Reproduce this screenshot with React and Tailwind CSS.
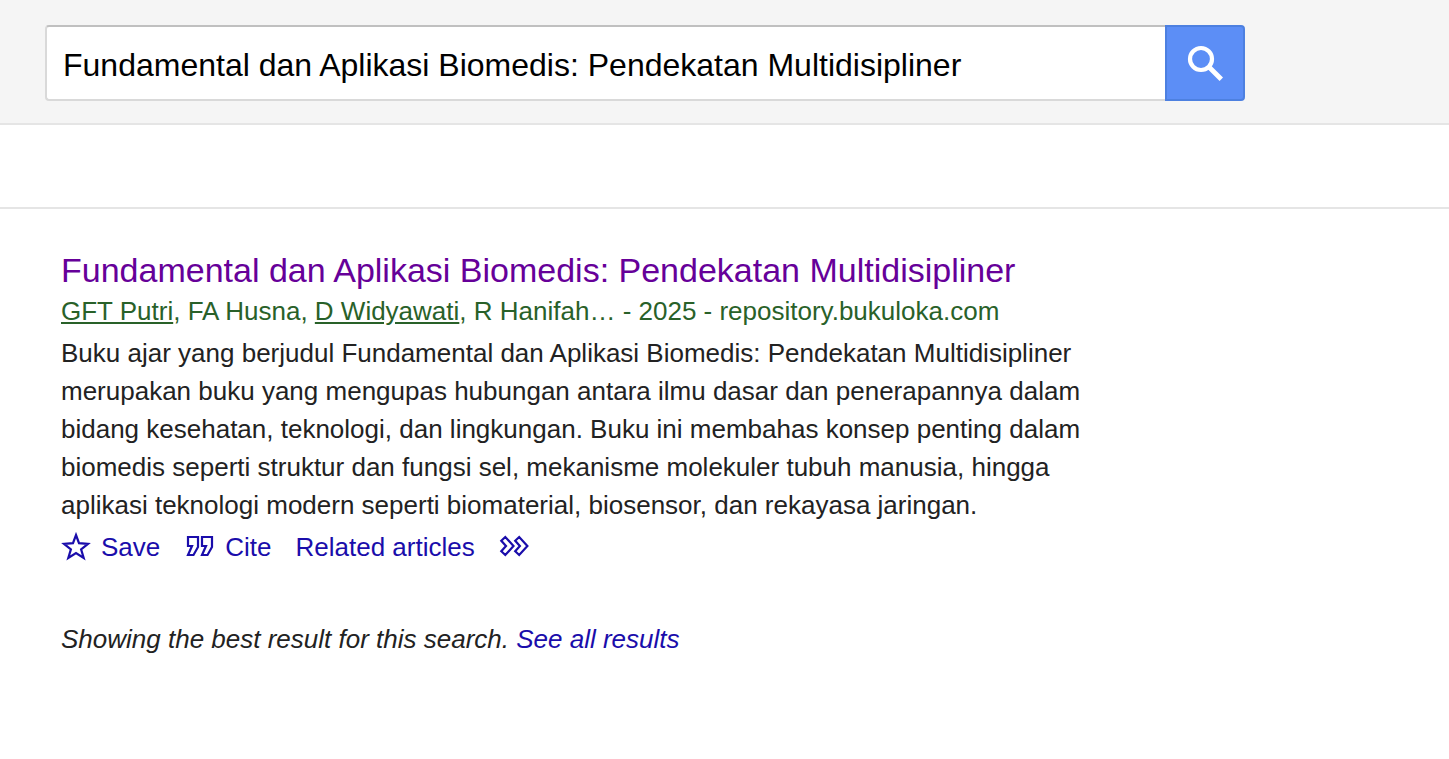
import React, { useState } from 'react';

const results = [
    {
        title: 'Fundamental dan Aplikasi Biomedis: Pendekatan Multidisipliner',
        source: ' - 2025 - repository.bukuloka.com',
        snippet: 'Buku ajar yang berjudul Fundamental dan Aplikasi Biomedis: Pendekatan Multidisipliner merupakan buku yang mengupas hubungan antara ilmu dasar dan penerapannya dalam bidang kesehatan, teknologi, dan lingkungan. Buku ini membahas konsep penting dalam biomedis seperti struktur dan fungsi sel, mekanisme molekuler tubuh manusia, hingga aplikasi teknologi modern seperti biomaterial, biosensor, dan rekayasa jaringan.',
    },
];

const SearchIcon = () => (
    <svg viewBox="0 0 36 36" className="w-9 h-9" fill="none" stroke="white" aria-hidden="true">
        <circle cx="14" cy="14" r="11" strokeWidth="4.2" />
        <path d="M22 22 34.3 34.3" strokeWidth="4.8" />
    </svg>
);

const StarIcon = () => (
    <svg viewBox="0 0 30 30" className="w-[30px] h-[30px]" fill="none" stroke="currentColor" strokeWidth="2.2" aria-hidden="true">
        <path d="M15 3 18 11.1 27 11.8 20.1 17.3 22.7 26 15 21.1 7.3 26 9.9 17.3 3 11.8 12 11.1Z" />
    </svg>
);

const QuoteIcon = () => (
    <svg viewBox="0 0 30 30" className="w-[30px] h-[30px]" fill="none" stroke="currentColor" strokeWidth="2.2" aria-hidden="true">
        <path d="M3 5H13V15L8.5 23H3L7 14H3ZM17 5H27V15L22.5 23H17L21 14H17Z" />
    </svg>
);

const MoreIcon = () => (
    <svg viewBox="0 0 30 30" className="w-[30px] h-[30px]" fill="none" stroke="currentColor" strokeWidth="2.2" aria-hidden="true">
        <path d="M2.3 8.8 6.3 5 14.5 14 6.3 23 2.3 19.2 7 14ZM16.2 8.8 20.2 5 28.4 14 20.2 23 16.2 19.2 20.9 14Z" />
    </svg>
);

const Result = ({ result }) => (
    <article>
        <h3 className="text-[34px] leading-[44px]">
            <a href="#result" className="text-[#609]">{result.title}</a>
        </h3>
        <div className="text-[#296129] leading-[38px]">
            <a href="#putri" className="underline">GFT Putri</a>, FA Husna, <a href="#widyawati" className="underline">D Widyawati</a>, R Hanifah…{result.source}
        </div>
        <p className="mt-1 leading-[38px]">{result.snippet}</p>
        <div className="mt-1 flex items-center leading-[38px] text-[#1a0dab]">
            <button type="button" className="flex items-center gap-2.5"><StarIcon />Save</button>
            <button type="button" className="ml-[25px] flex items-center gap-2.5"><QuoteIcon />Cite</button>
            <a href="#related" className="ml-6">Related articles</a>
            <button type="button" aria-label="More" className="ml-6"><MoreIcon /></button>
        </div>
    </article>
);

const App = () => {
    const [query, setQuery] = useState('Fundamental dan Aplikasi Biomedis: Pendekatan Multidisipliner');

    return (
        <div className="min-h-screen bg-white font-['Liberation_Sans',Arial,sans-serif] text-[26px] text-[#222]">
            <header className="bg-[#f5f5f5] border-b-2 border-[#e5e5e5] pt-[25px] pb-[22px] px-[45px]">
                <form onSubmit={(e) => e.preventDefault()} className="flex max-w-[1200px] h-[76px]">
                    <input
                        type="text"
                        aria-label="Search"
                        value={query}
                        onChange={(e) => setQuery(e.target.value)}
                        className="grow min-w-0 bg-white border-2 border-r-0 border-[#d9d9d9] border-t-[#c0c0c0] rounded-l-sm px-4 pt-1 text-[32px] text-black outline-none"
                    />
                    <button type="submit" aria-label="Search" className="w-20 shrink-0 flex items-center justify-center bg-[#5c8ef6] border-2 border-[#4d80e0] rounded-r-sm">
                        <SearchIcon />
                    </button>
                </form>
            </header>

            <div className="h-[84px] border-b-2 border-[#e5e5e5]" />

            <main className="max-w-[1100px] pl-[61px] pr-4 pt-[39px]">
                {results.map((result) => <Result key={result.title} result={result} />)}
                <p className="mt-[54px] leading-[38px] italic">
                    Showing the best result for this search. <a href="#all" className="text-[#1a0dab]">See all results</a>
                </p>
            </main>
        </div>
    );
};

export default App;
